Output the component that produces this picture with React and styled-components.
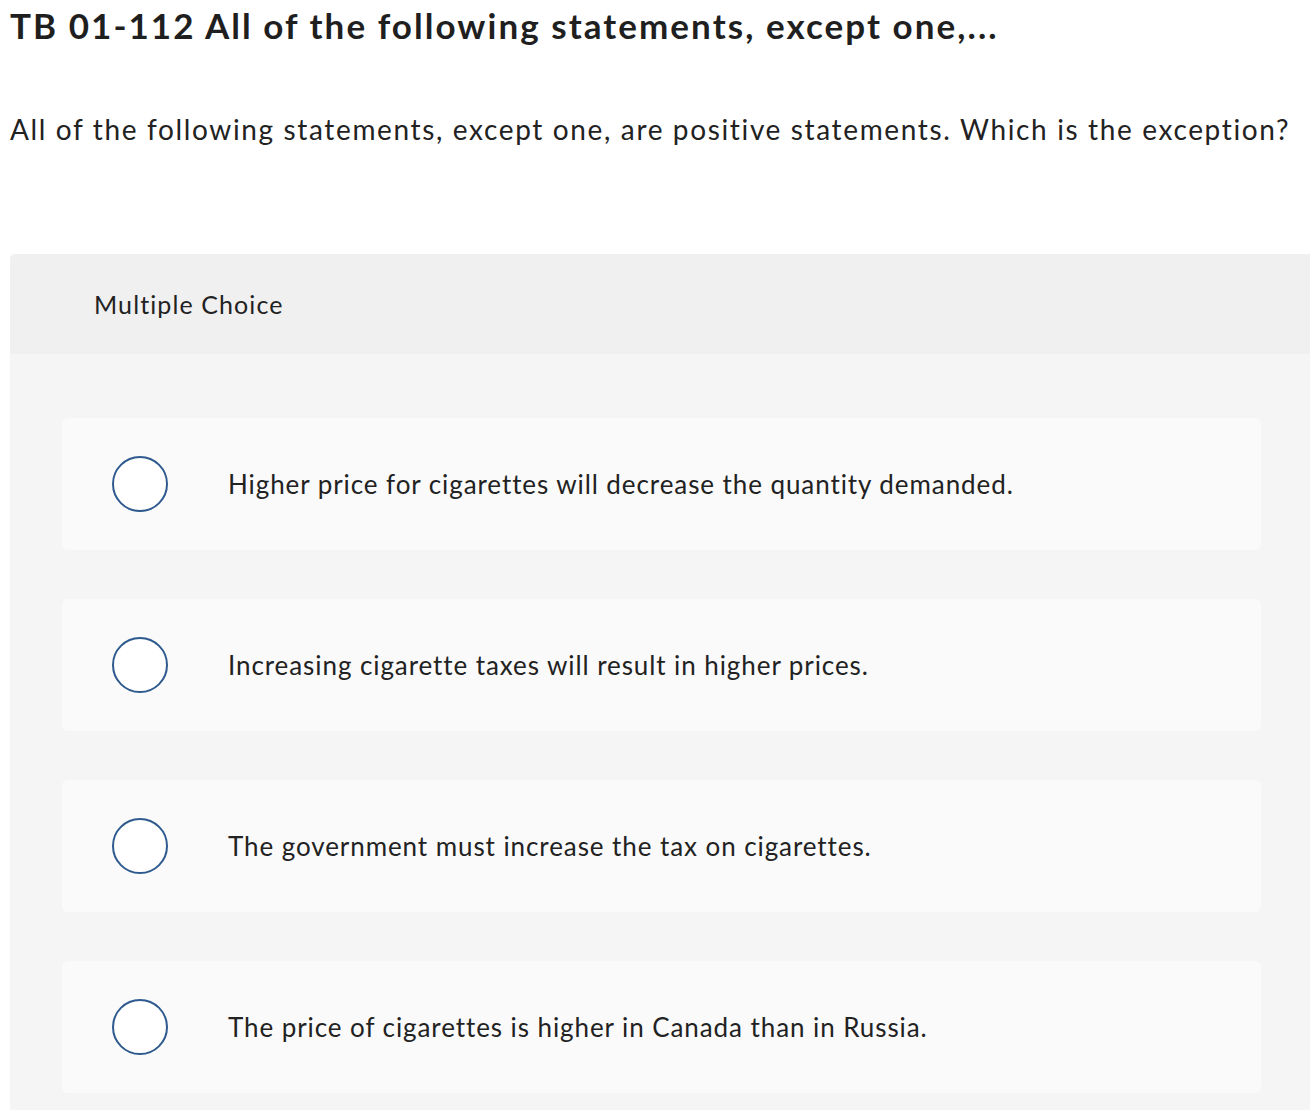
import React from 'react';
import styled, { createGlobalStyle } from 'styled-components';

const GlobalStyle = createGlobalStyle`
  html, body {
    margin: 0;
    padding: 0;
    background: #ffffff;
  }
  body {
    font-family: Lato, "Open Sans", sans-serif;
    color: #222222;
  }
`;

const Page = styled.div`
  width: 1310px;
  height: 1110px;
  overflow: hidden;
  padding: 0 0 0 10px;
  box-sizing: border-box;
`;

const Title = styled.h1`
  margin: 0;
  padding-top: 5px;
  font-size: 35px;
  line-height: 40px;
  font-weight: 700;
  letter-spacing: 2.05px;
  color: #1f1f1f;
  white-space: nowrap;
`;

const Question = styled.p`
  margin: 64px 0 0;
  font-size: 28px;
  line-height: 40px;
  letter-spacing: 1.64px;
  color: #222222;
  white-space: nowrap;
`;

const Panel = styled.section`
  margin-top: 105px;
  border-radius: 5px 0 0 0;
  overflow: hidden;
  background: #f5f5f5;
`;

const PanelHeader = styled.div`
  height: 100px;
  background: #f0f0f0;
  display: flex;
  align-items: center;
  padding-left: 84px;
  font-size: 25px;
  letter-spacing: 1.1px;
  color: #222222;
`;

const Choices = styled.div`
  display: flex;
  flex-direction: column;
  gap: 49px;
  padding: 64px 49px 40px 52px;
`;

const Choice = styled.label`
  display: flex;
  align-items: center;
  height: 132px;
  border-radius: 6px;
  background: #fafafa;
  cursor: pointer;
`;

const Radio = styled.span`
  flex: none;
  width: 52px;
  height: 52px;
  margin-left: 50px;
  border: 2px solid #2e5a8e;
  border-radius: 50%;
  background: #ffffff;
`;

const ChoiceText = styled.span`
  margin-left: 60px;
  font-size: 26px;
  letter-spacing: 0.92px;
  color: #222222;
`;

const choices = [
  'Higher price for cigarettes will decrease the quantity demanded.',
  'Increasing cigarette taxes will result in higher prices.',
  'The government must increase the tax on cigarettes.',
  'The price of cigarettes is higher in Canada than in Russia.',
];

const App = () => (
  <Page>
    <GlobalStyle />
    <Title>TB 01-112 All of the following statements, except one,...</Title>
    <Question>
      All of the following statements, except one, are positive statements. Which is the exception?
    </Question>
    <Panel>
      <PanelHeader>Multiple Choice</PanelHeader>
      <Choices>
        {choices.map((text) => (
          <Choice key={text}>
            <Radio />
            <ChoiceText>{text}</ChoiceText>
          </Choice>
        ))}
      </Choices>
    </Panel>
  </Page>
);

export default App;
